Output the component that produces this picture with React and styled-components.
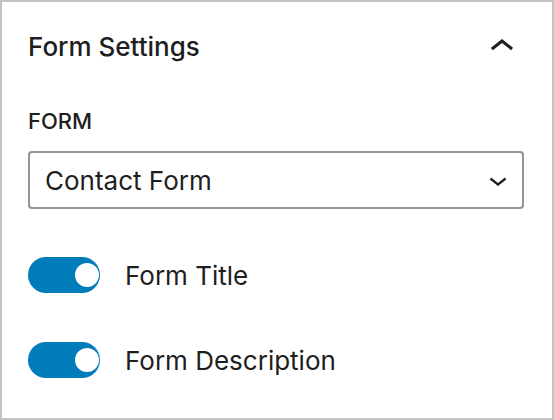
import React, { useState } from "react";
import styled, { createGlobalStyle } from "styled-components";

const Global = createGlobalStyle`
  html, body { margin: 0; padding: 0; background: #fff; }
  body { font-family: Inter, "Noto Sans", sans-serif; color: #1e1e1e; }
  * { box-sizing: border-box; }
`;

const Panel = styled.div`
  width: 554px;
  height: 420px;
  border: 2px solid #c3c3c3;
  background: #fff;
  padding: 21px 28px 0 26px;
  display: flex;
  flex-direction: column;
`;

const Header = styled.div`
  display: flex;
  align-items: center;
  justify-content: space-between;
  height: 48px;
`;

const Title = styled.h2`
  margin: 0;
  font-size: 26px;
  font-weight: 500;
  line-height: 48px;
  color: #1e1e1e;
`;

const IconButton = styled.button`
  border: 0;
  background: none;
  padding: 0;
  width: 48px;
  height: 48px;
  display: flex;
  color: #1e1e1e;
  cursor: pointer;
  margin-right: -2px;
`;

const Label = styled.div`
  margin-top: 35px;
  font-size: 22px;
  line-height: 30px;
  font-weight: 500;
  text-transform: uppercase;
`;

const SelectBox = styled.div`
  margin-top: 15px;
  height: 58px;
  width: 496px;
  border: 2px solid #949494;
  border-radius: 4px;
  display: flex;
  align-items: center;
  justify-content: space-between;
  padding: 0 6px 0 15px;
  font-size: 26px;
`;

const Toggles = styled.div`
  margin-top: 48px;
  display: flex;
  flex-direction: column;
  gap: 49px;
`;

const Row = styled.label`
  display: flex;
  align-items: center;
  gap: 25px;
  height: 36px;
  font-size: 26px;
  cursor: pointer;
`;

const Track = styled.span`
  position: relative;
  width: 72px;
  height: 36px;
  border-radius: 18px;
  background: ${(p) => (p.$on ? "#007cba" : "#fff")};
  border: ${(p) => (p.$on ? "none" : "2px solid #1e1e1e")};
  flex: none;
`;

const Thumb = styled.span`
  position: absolute;
  top: 6px;
  left: ${(p) => (p.$on ? "47px" : "6px")};
  width: 24px;
  height: 24px;
  border-radius: 50%;
  background: ${(p) => (p.$on ? "#fff" : "#1e1e1e")};
`;

const ChevronUp = () => (
  <svg width="48" height="48" viewBox="0 0 24 24" fill="currentColor">
    <path d="M6.5 12.4L12 8l5.5 4.4-.9 1.2L12 10l-4.6 3.6-1-1.2z" />
  </svg>
);

const ChevronDown = () => (
  <svg width="36" height="36" viewBox="0 0 24 24" fill="currentColor">
    <path d="M17.5 11.6L12 16l-5.5-4.4.9-1.2L12 14l4.6-3.6 1 1.2z" />
  </svg>
);

function Toggle({ label, defaultOn }) {
  const [on, setOn] = useState(defaultOn);
  return (
    <Row onClick={() => setOn(!on)}>
      <Track $on={on}>
        <Thumb $on={on} />
      </Track>
      {label}
    </Row>
  );
}

export default function App() {
  return (
    <>
      <Global />
      <Panel>
        <Header>
          <Title>Form Settings</Title>
          <IconButton aria-label="Collapse">
            <ChevronUp />
          </IconButton>
        </Header>
        <Label>Form</Label>
        <SelectBox>
          <span>Contact Form</span>
          <ChevronDown />
        </SelectBox>
        <Toggles>
          <Toggle label="Form Title" defaultOn />
          <Toggle label="Form Description" defaultOn />
        </Toggles>
      </Panel>
    </>
  );
}
